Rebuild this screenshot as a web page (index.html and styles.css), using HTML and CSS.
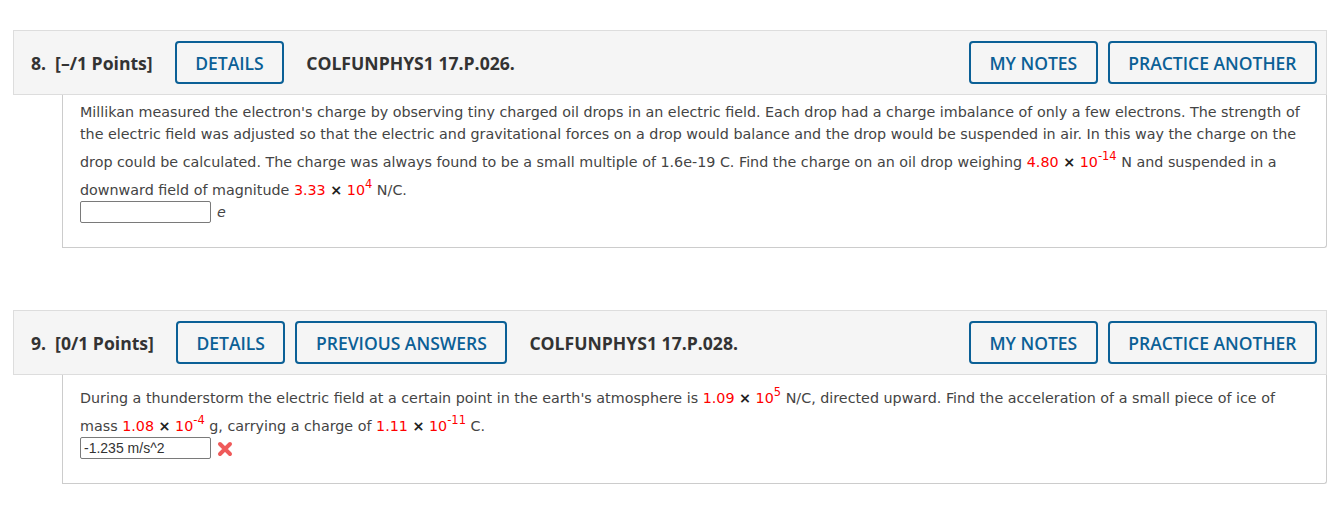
FILE: index.html
```html
<!DOCTYPE html>
<html>
<head>
<meta charset="utf-8">
<link rel="stylesheet" href="styles.css">
</head>
<body>
<div class="page">
  <section class="question">
    <div class="q-head">
      <div class="q-left">
        <span class="q-label"><span class="q-num">8.</span>[–/1 Points]</span>
        <button class="btn">DETAILS</button>
        <span class="q-code">COLFUNPHYS1 17.P.026.</span>
      </div>
      <div class="q-right">
        <button class="btn">MY NOTES</button>
        <button class="btn">PRACTICE ANOTHER</button>
      </div>
    </div>
    <div class="q-body">
      <p class="q-text">Millikan measured the electron's charge by observing tiny charged oil drops in an electric field. Each drop had a charge imbalance of only a few electrons. The strength of the electric field was adjusted so that the electric and gravitational forces on a drop would balance and the drop would be suspended in air. In this way the charge on the drop could be calculated. The charge was always found to be a small multiple of 1.6e-19 C. Find the charge on an oil drop weighing <span class="red">4.80</span> <span class="times">×</span> <span class="red">10<sup>-14</sup></span> N and suspended in a downward field of magnitude <span class="red">3.33</span> <span class="times">×</span> <span class="red">10<sup>4</sup></span> N/C.</p>
      <div class="answer">
        <input class="ans-input" type="text" value="">
        <span class="unit">e</span>
      </div>
    </div>
  </section>

  <section class="question q2">
    <div class="q-head">
      <div class="q-left">
        <span class="q-label"><span class="q-num">9.</span>[0/1 Points]</span>
        <div class="btn-pair">
          <button class="btn">DETAILS</button>
          <button class="btn">PREVIOUS ANSWERS</button>
        </div>
        <span class="q-code">COLFUNPHYS1 17.P.028.</span>
      </div>
      <div class="q-right">
        <button class="btn">MY NOTES</button>
        <button class="btn">PRACTICE ANOTHER</button>
      </div>
    </div>
    <div class="q-body">
      <p class="q-text">During a thunderstorm the electric field at a certain point in the earth's atmosphere is <span class="red">1.09</span> <span class="times">×</span> <span class="red">10<sup>5</sup></span> N/C, directed upward. Find the acceleration of a small piece of ice of mass <span class="red">1.08</span> <span class="times">×</span> <span class="red">10<sup>-4</sup></span> g, carrying a charge of <span class="red">1.11</span> <span class="times">×</span> <span class="red">10<sup>-11</sup></span> C.</p>
      <div class="answer">
        <input class="ans-input" type="text" value="-1.235 m/s^2">
        <svg class="wrong" width="16" height="16" viewBox="0 0 16 16"><path d="M3 3 L13 13 M13 3 L3 13" stroke="#ef5a5a" stroke-width="4" stroke-linecap="round"/></svg>
      </div>
    </div>
  </section>
</div>
</body>
</html>
```

FILE: styles.css
```css
html, body {
  margin: 0;
  padding: 0;
  background: #ffffff;
}

.page {
  padding: 30px 4px 0 13px;
}

.question {
  display: flex;
  flex-direction: column;
}

.q2 {
  margin-top: 62px;
}

.q-head {
  display: flex;
  align-items: center;
  justify-content: space-between;
  background: #f5f5f5;
  border: 1px solid #dddddd;
  padding: 10px 9px 10px 17px;
  font-family: "Open Sans", sans-serif;
  color: #333333;
}

.q-left, .q-right {
  display: flex;
  align-items: center;
}

.q-left {
  gap: 22px;
}

.q-right, .btn-pair {
  display: flex;
  gap: 10px;
}

.q-label {
  font-weight: 700;
  font-size: 17.6px;
}

.q-num {
  margin-right: 9px;
}

.q-code {
  font-weight: 700;
  font-size: 17.6px;
}

.btn {
  height: 43px;
  box-sizing: border-box;
  background: transparent;
  border: 2px solid #0b6096;
  border-radius: 4px;
  color: #0b6096;
  font-family: "Open Sans", sans-serif;
  font-weight: 600;
  font-size: 17.5px;
  padding: 0 18.5px;
  margin: 0;
}

.q-body {
  margin-left: 49px;
  border: 1px solid #cccccc;
  border-top: none;
  border-radius: 0 0 3px 0;
  padding: 6px 20px 24px 17px;
  font-family: "DejaVu Sans", Verdana, sans-serif;
  font-size: 14.3px;
  color: #444444;
}

.q-text {
  margin: 0;
  line-height: 22px;
}

.q-text sup {
  font-size: 11.5px;
  line-height: 22px;
  vertical-align: 7px;
}

.red {
  color: #ff0000;
}

.times {
  color: #222222;
  font-weight: 700;
}

.answer {
  display: flex;
  align-items: center;
  gap: 6px;
  margin-top: 0;
}

.ans-input {
  width: 131px;
  height: 22px;
  box-sizing: border-box;
  border: 1px solid #7a7a7a;
  border-radius: 2px;
  padding: 1px 3px;
  font-family: "Liberation Sans", Arial, sans-serif;
  font-size: 14px;
  color: #333333;
  margin: 0;
}

.unit {
  font-style: italic;
  color: #444444;
}

.wrong {
  margin-top: 2px;
}
```
